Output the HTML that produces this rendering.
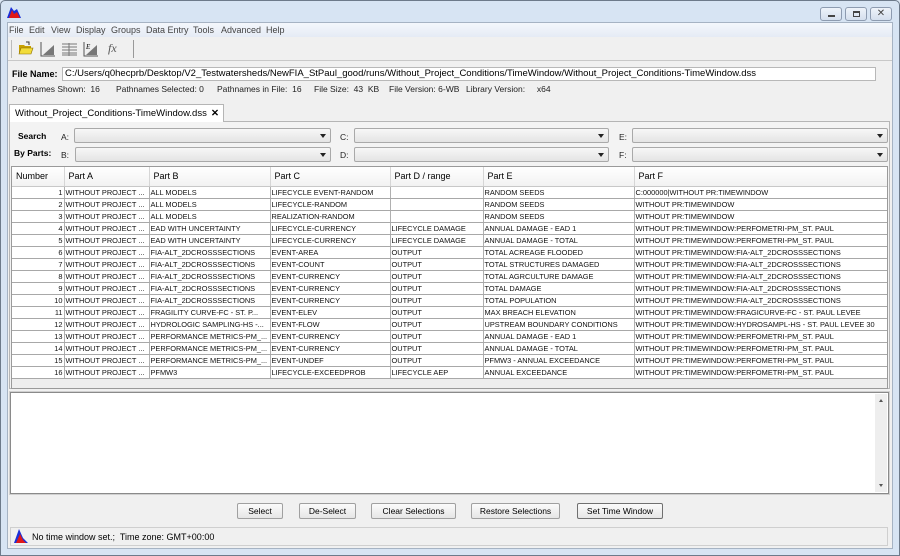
<!DOCTYPE html>
<html><head><meta charset="utf-8">
<style>
*{box-sizing:border-box;margin:0;padding:0}
body{width:900px;height:556px;overflow:hidden;background:#dce7f4;font-family:"Liberation Sans",Arial,sans-serif;font-size:9px;color:#000;position:relative}
.abs{position:absolute}
#frame{left:0;top:0;width:900px;height:556px;border:1px solid #6d7a8a;border-radius:5px 5px 0 0;background:#d7e4f3}
#client{left:7px;top:22px;width:886px;height:527px;background:#f0f0f0;border:1px solid #a6b3c3}
#menu{left:8px;top:23px;width:884px;height:14px;background:linear-gradient(#f4f7fc,#e5ebf5);font-size:9px;color:#444}
#menu span{position:absolute;top:2px}
.wbtn{top:7px;height:14px;border:1px solid #8d9bb0;border-radius:3px;background:linear-gradient(#eef3fa,#d4dfee)}
.lbl{font-size:8.5px;color:#222;white-space:nowrap}
.combo{height:15px;border:1px solid #a9a9a9;border-radius:2px;background:linear-gradient(#f7f7f7,#e4e4e4)}
.combo:after{content:"";position:absolute;right:4px;top:5px;border-left:3px solid transparent;border-right:3px solid transparent;border-top:4px solid #222}
table{border-collapse:collapse;table-layout:fixed;font-size:7.4px;font-family:"Liberation Sans",Arial,sans-serif}
td{height:12px;border-right:1px solid #b0b0b0;border-bottom:1px solid #a8a8a8;padding:0 1px;white-space:nowrap;overflow:hidden;line-height:11px;color:#111}
th{height:19px;font-weight:normal;font-size:9px;text-align:left;padding-left:4px;border-right:1px solid #d6d6d6;border-bottom:1px solid #c8c8c8;background:linear-gradient(#ffffff,#f2f2f2)}
td.n{text-align:right}
.btn{top:503px;height:16px;border:1px solid #a0a0a0;border-radius:2px;background:linear-gradient(#fbfbfb,#e6e6e6);font-size:8.5px;text-align:center;line-height:14px}
</style></head><body>
<div id="frame" class="abs"></div>
<svg class="abs" style="left:7px;top:6px" width="14" height="12" viewBox="0 0 14 12"><path d="M0 12 L4 1 L7 5 L10 3 L14 12Z" fill="#1a2fd8"/><path d="M2 12 L5 4 L7 8 L10 6 L13 12Z" fill="#e01818"/></svg>
<div class="abs wbtn" style="left:820px;width:22px"><div class="abs" style="left:7px;top:7px;width:7px;height:2px;background:#444"></div></div>
<div class="abs wbtn" style="left:845px;width:22px"><div class="abs" style="left:7px;top:3px;width:7px;height:6px;border:1px solid #444;border-top-width:2px"></div></div>
<div class="abs wbtn" style="left:870px;width:22px;font-size:10px;text-align:center;line-height:12px;color:#444">✕</div>
<div id="client" class="abs"></div>
<div id="menu" class="abs">
<span style="left:1px">File</span><span style="left:21px">Edit</span><span style="left:43px">View</span><span style="left:68px">Display</span><span style="left:103px">Groups</span><span style="left:138px">Data Entry</span><span style="left:185px">Tools</span><span style="left:213px">Advanced</span><span style="left:258px">Help</span></div>
<div class="abs" style="left:8px;top:37px;width:884px;height:24px;border-bottom:1px solid #c8c8c8"></div>
<div class="abs" style="left:11px;top:40px;width:1px;height:18px;background:#bbb"></div>
<svg class="abs" style="left:18px;top:41px" width="16" height="14" viewBox="0 0 16 14"><path d="M1 4h5l1 1h6v8H1z" fill="#c8a000"/><path d="M3 7h12l-2 6H1z" fill="#f2dc3a" stroke="#8a6d00" stroke-width=".6"/><path d="M8 1l3 0 0 3" fill="none" stroke="#333"/></svg>
<svg class="abs" style="left:40px;top:41px" width="16" height="16"><path d="M1 1V15H15" fill="none" stroke="#555"/><path d="M3 14L14 14 14 4Z" fill="#777"/></svg>
<svg class="abs" style="left:61px;top:42px" width="17" height="14"><g stroke="#777"><path d="M1 2h15M1 5h15M1 8h15M1 11h15M1 13h15"/><path d="M8 1v13"/></g></svg>
<svg class="abs" style="left:83px;top:41px" width="16" height="16"><path d="M1 1V15H15" fill="none" stroke="#555"/><path d="M3 14L14 14 14 4Z" fill="#777"/><text x="3" y="8" font-size="7" font-style="italic" font-family="Liberation Serif">E</text></svg>
<div class="abs" style="left:108px;top:41px;font-family:'Liberation Serif',serif;font-style:italic;font-size:12px;color:#555">fx</div>
<div class="abs" style="left:133px;top:40px;width:1px;height:18px;background:#999"></div>
<div class="abs" style="left:12px;top:69px;font-weight:bold;font-size:9px">File Name:</div>
<div class="abs" style="left:62px;top:67px;width:814px;height:14px;background:#fff;border:1px solid #b8b8b8;font-size:9.5px;line-height:12px;padding-left:2px">C:/Users/q0hecprb/Desktop/V2_Testwatersheds/NewFIA_StPaul_good/runs/Without_Project_Conditions/TimeWindow/Without_Project_Conditions-TimeWindow.dss</div>
<div class="abs lbl" style="left:12px;top:84px">Pathnames Shown:&nbsp; 16</div>
<div class="abs lbl" style="left:116px;top:84px">Pathnames Selected: 0</div>
<div class="abs lbl" style="left:217px;top:84px">Pathnames in File:&nbsp; 16</div>
<div class="abs lbl" style="left:314px;top:84px">File Size:&nbsp; 43&nbsp; KB</div>
<div class="abs lbl" style="left:389px;top:84px">File Version: 6-WB</div>
<div class="abs lbl" style="left:466px;top:84px">Library Version:&nbsp;&nbsp;&nbsp;&nbsp; x64</div>
<div class="abs" style="left:9px;top:121px;width:881px;height:268px;border:1px solid #b5b5b5;background:#f3f3f3"></div>
<div class="abs" style="left:9px;top:104px;width:215px;height:18px;border:1px solid #b5b5b5;border-bottom:none;background:#fff;font-size:9.5px;line-height:17px;padding-left:5px">Without_Project_Conditions-TimeWindow.dss<span style="position:absolute;left:201px;font-weight:bold">✕</span></div>
<div class="abs" style="left:18px;top:131px;font-weight:bold;font-size:8.5px">Search</div>
<div class="abs" style="left:14px;top:148px;font-weight:bold;font-size:8.5px">By Parts:</div>
<div class="abs lbl" style="left:61px;top:132px">A:</div><div class="abs lbl" style="left:61px;top:150px">B:</div>
<div class="abs lbl" style="left:340px;top:132px">C:</div><div class="abs lbl" style="left:340px;top:150px">D:</div>
<div class="abs lbl" style="left:619px;top:132px">E:</div><div class="abs lbl" style="left:619px;top:150px">F:</div>
<div class="abs combo" style="left:74px;top:128px;width:257px"></div>
<div class="abs combo" style="left:75px;top:147px;width:256px"></div>
<div class="abs combo" style="left:354px;top:128px;width:255px"></div>
<div class="abs combo" style="left:354px;top:147px;width:255px"></div>
<div class="abs combo" style="left:632px;top:128px;width:256px"></div>
<div class="abs combo" style="left:632px;top:147px;width:256px"></div>
<div class="abs" style="left:11px;top:166px;width:877px;height:223px;border:1px solid #9a9a9a;background:#eeeeee;overflow:hidden">
<table style="width:875px;background:#fff">
<colgroup><col style="width:52px"><col style="width:85px"><col style="width:121px"><col style="width:120px"><col style="width:93px"><col style="width:151px"><col style="width:253px"></colgroup>
<tr><th>Number</th><th>Part A</th><th>Part B</th><th>Part C</th><th>Part D / range</th><th>Part E</th><th>Part F</th></tr>
<tr><td class="n">1</td><td>WITHOUT PROJECT ...</td><td>ALL MODELS</td><td>LIFECYCLE EVENT-RANDOM</td><td></td><td>RANDOM SEEDS</td><td>C:000000|WITHOUT PR:TIMEWINDOW</td></tr>
<tr><td class="n">2</td><td>WITHOUT PROJECT ...</td><td>ALL MODELS</td><td>LIFECYCLE-RANDOM</td><td></td><td>RANDOM SEEDS</td><td>WITHOUT PR:TIMEWINDOW</td></tr>
<tr><td class="n">3</td><td>WITHOUT PROJECT ...</td><td>ALL MODELS</td><td>REALIZATION-RANDOM</td><td></td><td>RANDOM SEEDS</td><td>WITHOUT PR:TIMEWINDOW</td></tr>
<tr><td class="n">4</td><td>WITHOUT PROJECT ...</td><td>EAD WITH UNCERTAINTY</td><td>LIFECYCLE-CURRENCY</td><td>LIFECYCLE DAMAGE</td><td>ANNUAL DAMAGE - EAD 1</td><td>WITHOUT PR:TIMEWINDOW:PERFOMETRI-PM_ST. PAUL</td></tr>
<tr><td class="n">5</td><td>WITHOUT PROJECT ...</td><td>EAD WITH UNCERTAINTY</td><td>LIFECYCLE-CURRENCY</td><td>LIFECYCLE DAMAGE</td><td>ANNUAL DAMAGE - TOTAL</td><td>WITHOUT PR:TIMEWINDOW:PERFOMETRI-PM_ST. PAUL</td></tr>
<tr><td class="n">6</td><td>WITHOUT PROJECT ...</td><td>FIA-ALT_2DCROSSSECTIONS</td><td>EVENT-AREA</td><td>OUTPUT</td><td>TOTAL ACREAGE FLOODED</td><td>WITHOUT PR:TIMEWINDOW:FIA-ALT_2DCROSSSECTIONS</td></tr>
<tr><td class="n">7</td><td>WITHOUT PROJECT ...</td><td>FIA-ALT_2DCROSSSECTIONS</td><td>EVENT-COUNT</td><td>OUTPUT</td><td>TOTAL STRUCTURES DAMAGED</td><td>WITHOUT PR:TIMEWINDOW:FIA-ALT_2DCROSSSECTIONS</td></tr>
<tr><td class="n">8</td><td>WITHOUT PROJECT ...</td><td>FIA-ALT_2DCROSSSECTIONS</td><td>EVENT-CURRENCY</td><td>OUTPUT</td><td>TOTAL AGRCULTURE DAMAGE</td><td>WITHOUT PR:TIMEWINDOW:FIA-ALT_2DCROSSSECTIONS</td></tr>
<tr><td class="n">9</td><td>WITHOUT PROJECT ...</td><td>FIA-ALT_2DCROSSSECTIONS</td><td>EVENT-CURRENCY</td><td>OUTPUT</td><td>TOTAL DAMAGE</td><td>WITHOUT PR:TIMEWINDOW:FIA-ALT_2DCROSSSECTIONS</td></tr>
<tr><td class="n">10</td><td>WITHOUT PROJECT ...</td><td>FIA-ALT_2DCROSSSECTIONS</td><td>EVENT-CURRENCY</td><td>OUTPUT</td><td>TOTAL POPULATION</td><td>WITHOUT PR:TIMEWINDOW:FIA-ALT_2DCROSSSECTIONS</td></tr>
<tr><td class="n">11</td><td>WITHOUT PROJECT ...</td><td>FRAGILITY CURVE-FC - ST. P...</td><td>EVENT-ELEV</td><td>OUTPUT</td><td>MAX BREACH ELEVATION</td><td>WITHOUT PR:TIMEWINDOW:FRAGICURVE-FC - ST. PAUL LEVEE</td></tr>
<tr><td class="n">12</td><td>WITHOUT PROJECT ...</td><td>HYDROLOGIC SAMPLING-HS -...</td><td>EVENT-FLOW</td><td>OUTPUT</td><td>UPSTREAM BOUNDARY CONDITIONS</td><td>WITHOUT PR:TIMEWINDOW:HYDROSAMPL-HS - ST. PAUL LEVEE 30</td></tr>
<tr><td class="n">13</td><td>WITHOUT PROJECT ...</td><td>PERFORMANCE METRICS-PM_...</td><td>EVENT-CURRENCY</td><td>OUTPUT</td><td>ANNUAL DAMAGE - EAD 1</td><td>WITHOUT PR:TIMEWINDOW:PERFOMETRI-PM_ST. PAUL</td></tr>
<tr><td class="n">14</td><td>WITHOUT PROJECT ...</td><td>PERFORMANCE METRICS-PM_...</td><td>EVENT-CURRENCY</td><td>OUTPUT</td><td>ANNUAL DAMAGE - TOTAL</td><td>WITHOUT PR:TIMEWINDOW:PERFOMETRI-PM_ST. PAUL</td></tr>
<tr><td class="n">15</td><td>WITHOUT PROJECT ...</td><td>PERFORMANCE METRICS-PM_...</td><td>EVENT-UNDEF</td><td>OUTPUT</td><td>PFMW3 - ANNUAL EXCEEDANCE</td><td>WITHOUT PR:TIMEWINDOW:PERFOMETRI-PM_ST. PAUL</td></tr>
<tr><td class="n">16</td><td>WITHOUT PROJECT ...</td><td>PFMW3</td><td>LIFECYCLE-EXCEEDPROB</td><td>LIFECYCLE AEP</td><td>ANNUAL EXCEEDANCE</td><td>WITHOUT PR:TIMEWINDOW:PERFOMETRI-PM_ST. PAUL</td></tr>
</table></div>
<div class="abs" style="left:10px;top:392px;width:879px;height:102px;border:1px solid #8a8a8a;background:#fff;box-shadow:0 0 0 1px #d0d0d0"></div>
<div class="abs" style="left:875px;top:394px;width:12px;height:98px;background:#eeeeee"></div>
<div class="abs" style="left:879px;top:399px;border-left:2px solid transparent;border-right:2px solid transparent;border-bottom:3px solid #555"></div>
<div class="abs" style="left:879px;top:484px;border-left:2px solid transparent;border-right:2px solid transparent;border-top:3px solid #555"></div>
<div class="abs btn" style="left:237px;width:46px">Select</div>
<div class="abs btn" style="left:299px;width:57px">De-Select</div>
<div class="abs btn" style="left:371px;width:85px">Clear Selections</div>
<div class="abs btn" style="left:471px;width:89px">Restore Selections</div>
<div class="abs btn" style="left:577px;width:86px;border-color:#707070">Set Time Window</div>
<div class="abs" style="left:10px;top:527px;width:878px;height:19px;border:1px solid #cfcfcf;background:#f0f0f0"></div>
<svg class="abs" style="left:14px;top:529px" width="14" height="14" viewBox="0 0 14 14"><path d="M0 14 L5 0 L9 9 L14 14Z" fill="#1a2fd8"/><path d="M2 14 L6 5 L9 11 L12 14Z" fill="#e01818"/></svg>
<div class="abs" style="left:32px;top:532px;font-size:9px">No time window set.;&nbsp; Time zone: GMT+00:00</div>
</body></html>
